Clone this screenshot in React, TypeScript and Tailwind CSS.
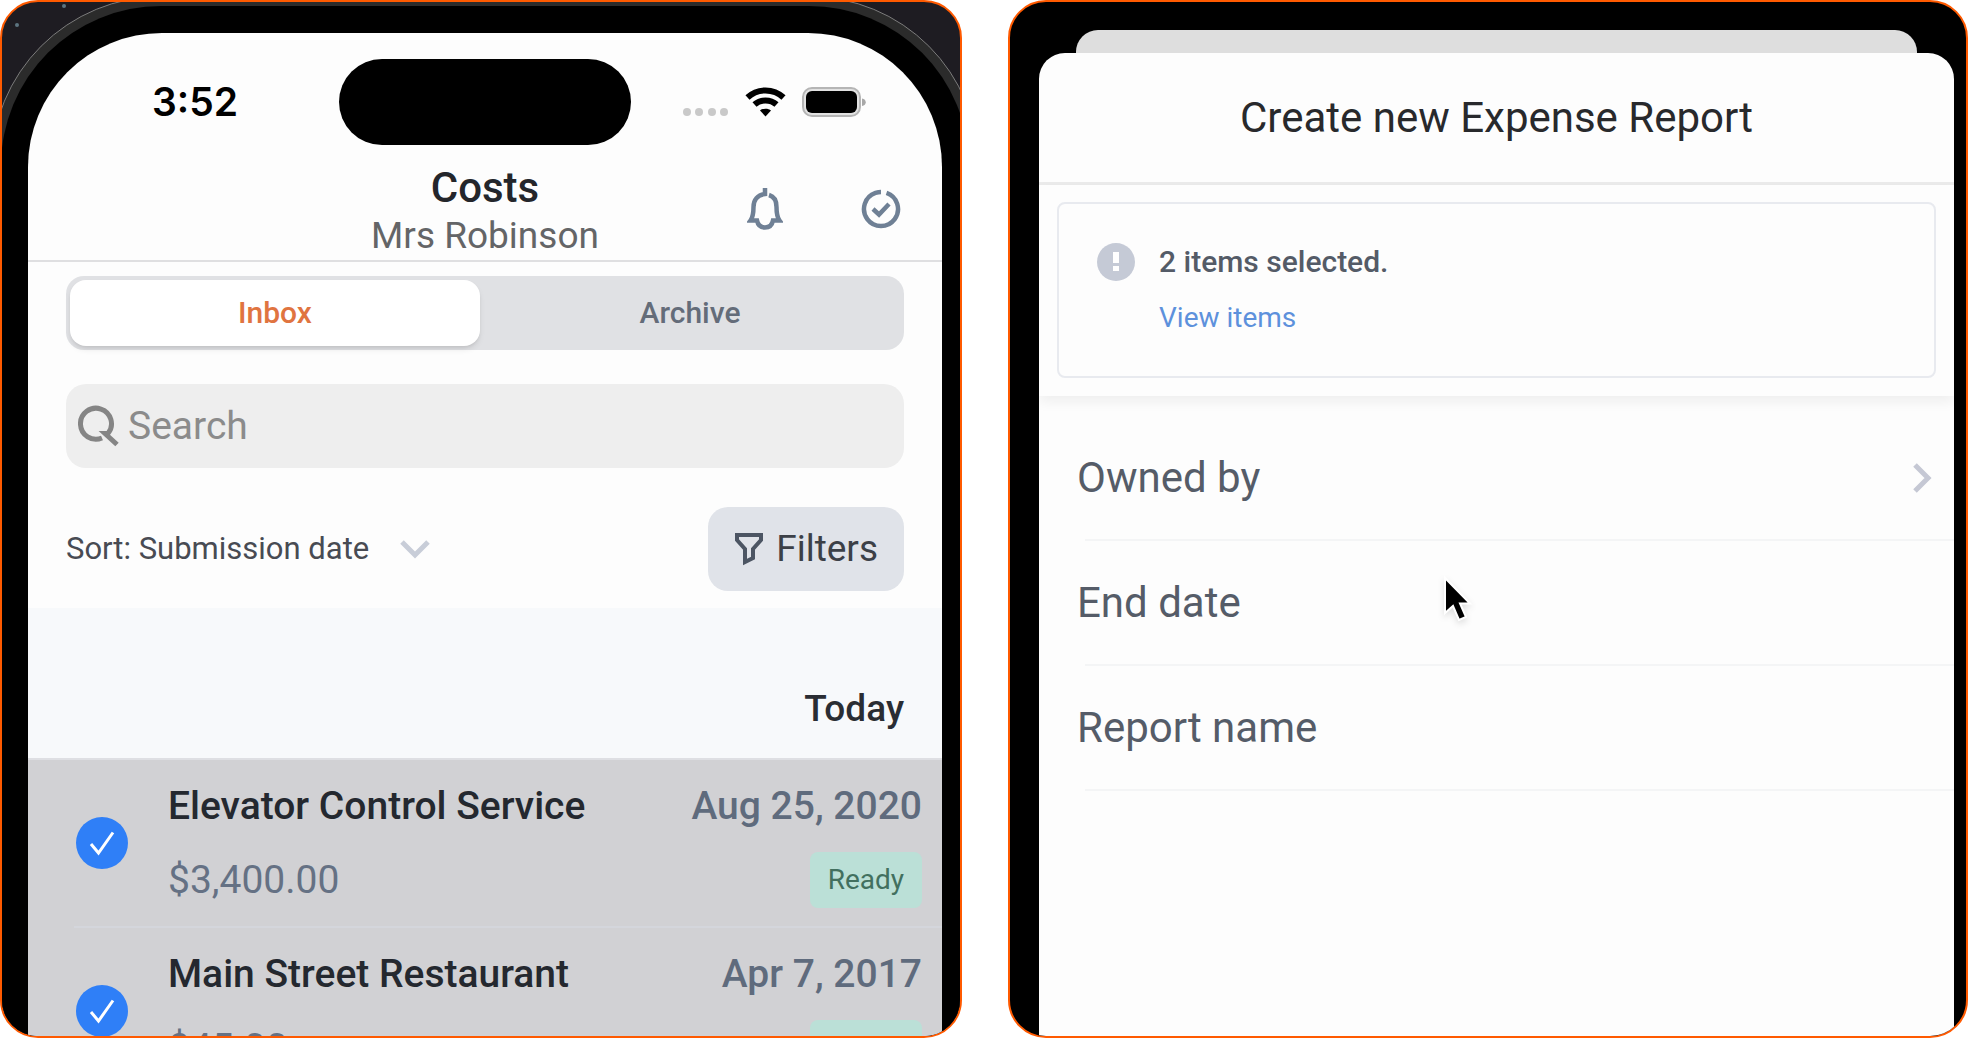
import { useState } from "react";

const expenses = [
    { id: "elevator", title: "Elevator Control Service", date: "Aug 25, 2020", amount: "$3,400.00", status: "Ready" },
    { id: "restaurant", title: "Main Street Restaurant", date: "Apr 7, 2017", amount: "$45.00", status: "Ready" },
];

function StatusIcons() {
    return (
        <svg width="184" height="32" viewBox="0 0 184 32" aria-hidden="true">
            <g fill="#c9c9c9">
                <circle cx="5" cy="26" r="4" />
                <circle cx="17" cy="26" r="4" />
                <circle cx="30" cy="26" r="4" />
                <circle cx="42" cy="26" r="4" />
            </g>
            <g fill="none" stroke="#000" strokeWidth="6">
                <path d="M65.500 11.500C75.500 2 91.500 2 101.500 11.500" />
                <path d="M72.500 18.500C78.500 13 88.500 13 94.500 18.500" />
            </g>
            <path d="M78 24.500C80.500 22 86.500 22 89 24.500L83.500 30.500Z" fill="#000" />
            <rect x="121" y="2" width="57" height="28" rx="9" fill="#e2e2e2" stroke="#b5b5b5" strokeWidth="2" />
            <rect x="124" y="5" width="51" height="22" rx="6" fill="#000" />
            <path d="M180 12.500C185 13 185 19.500 180 20Z" fill="#a8a8a8" />
        </svg>
    );
}

function BellIcon() {
    return (
        <svg width="36" height="44" viewBox="0 0 36 44" fill="none" stroke="#6f8095" strokeWidth="4.500" aria-hidden="true">
            <path d="M18 1V7C10.500 8 6.500 13 6.500 20C6.500 27 6 30 3.500 33.500H10C11 38.500 14 40.500 18 40.500C22 40.500 25 38.500 26 33.500H32.500C30 30 29.500 27 29.500 20C29.500 14 27 9.500 22 8" />
        </svg>
    );
}

function ApprovedIcon() {
    return (
        <svg width="40" height="40" viewBox="0 0 40 40" fill="none" stroke="#6f8095" strokeWidth="4.500" aria-hidden="true">
            <path d="M25.500 3.900A17 17 0 1 1 14.500 3.900Q17.500 3 20 3" />
            <path d="M12 20L18 25.500L28 15" />
        </svg>
    );
}

function ExpenseRow({ id, title, date, amount, status }: (typeof expenses)[number]) {
    const [checked, setChecked] = useState(true);

    return (
        <li className="pl-[46px]">
            <div className="flex h-[168px] items-center gap-10 border-b-2 border-[#d4d6dc] pr-5 pl-0.5">
                <span className="grid shrink-0 place-items-center">
                    <input
                        id={id}
                        type="checkbox"
                        checked={checked}
                        onChange={() => setChecked(!checked)}
                        className="col-start-1 row-start-1 size-[52px] appearance-none rounded-full bg-white checked:bg-[#2f7ff7]"
                    />
                    <svg width="28" height="28" viewBox="0 0 28 28" className="pointer-events-none col-start-1 row-start-1" fill="none" stroke="#fff" strokeWidth="3" aria-hidden="true">
                        <path d="M3 15L10.500 24L25 3.500" />
                    </svg>
                </span>
                <div className="flex-1">
                    <div className="flex h-[74px] items-center justify-between text-[39px] font-medium">
                        <label htmlFor={id} className="text-[#24282f]">{title}</label>
                        <span className="text-[#5f6b7d]">{date}</span>
                    </div>
                    <div className="flex h-[74px] items-center justify-between">
                        <span className="text-[39px] text-[#657184]">{amount}</span>
                        <span className="rounded-lg bg-[#bbe0d7] px-[18px] text-[28px] leading-[56px] text-[#42705f]">{status}</span>
                    </div>
                </div>
            </div>
        </li>
    );
}

function CostsPhone() {
    const [tab, setTab] = useState("Inbox");

    return (
        <section className="relative flex flex-col overflow-hidden rounded-[38px] border-2 border-[#ff5a00] bg-[#1e1c22]">
            {/* night wallpaper behind the device */}
            <svg className="absolute top-0 left-0" width="80" height="80" fill="#5d7480" aria-hidden="true">
                <circle cx="62" cy="4" r="2" />
                <circle cx="15" cy="23" r="2" />
            </svg>
            <div className="relative -mt-1.5 -mr-[19px] -ml-[11px] flex-1 rounded-t-[170px] border border-[#7c7c7c] bg-[#2b2b2b] p-[9px]">
                <div className="h-full rounded-t-[160px] bg-black p-[27px]">
                    <div className="h-full overflow-hidden rounded-t-[134px] bg-[#fdfdfd]">
                        <div className="grid grid-cols-[1fr_292px_1fr] items-center pt-[26px]">
                            <span className="pl-[124px] font-[Inter] text-[39px] font-semibold text-black">3:52</span>
                            <span className="h-[86px] rounded-full bg-black" />
                            <span className="flex justify-end pr-[76px]">
                                <StatusIcons />
                            </span>
                        </div>

                        <header className="grid grid-cols-[1fr_auto_1fr] items-center border-b-2 border-[#dfdfe1] pt-[19px]">
                            <div className="col-start-2 text-center leading-[48px]">
                                <h1 className="text-[42px] font-medium text-[#24262b]">Costs</h1>
                                <p className="text-[37px] text-[#646567]">Mrs Robinson</p>
                            </div>
                            <div className="flex items-center justify-end gap-[78px] pr-[41px] pb-1.5">
                                <button aria-label="Notifications"><BellIcon /></button>
                                <button aria-label="Approvals"><ApprovedIcon /></button>
                            </div>
                        </header>

                        <div className="px-[38px]">
                            <div role="tablist" className="mt-3.5 grid grid-cols-[410fr_420fr] rounded-[18px] bg-[#e0e1e4] p-1 text-[30px] leading-[66px] font-medium">
                                {["Inbox", "Archive"].map((name) => (
                                    <button
                                        key={name}
                                        role="tab"
                                        aria-selected={tab === name}
                                        onClick={() => setTab(name)}
                                        className="rounded-2xl text-[#646c79] aria-selected:bg-white aria-selected:text-[#e07440] aria-selected:shadow-md"
                                    >
                                        {name}
                                    </button>
                                ))}
                            </div>

                            <label className="mt-[34px] flex h-[84px] items-center gap-2 rounded-[20px] bg-[#eeeeee] pl-3">
                                <svg width="42" height="42" viewBox="0 0 42 42" fill="none" stroke="#858585" strokeWidth="5" aria-hidden="true">
                                    <path d="M24 33A15.500 15.500 0 1 1 30 28.500H27L39 39.500" />
                                </svg>
                                <input type="search" placeholder="Search" aria-label="Search" className="min-w-0 flex-1 text-[39px] outline-none placeholder:text-[#8b8b8b]" />
                            </label>

                            <div className="flex items-center justify-between pt-[39px] pb-[17px]">
                                <label className="flex items-center gap-[30px]">
                                    <select aria-label="Sort" className="appearance-none text-[31px] text-[#484b53]">
                                        <option>Sort: Submission date</option>
                                    </select>
                                    <svg width="30" height="20" viewBox="0 0 30 20" fill="none" stroke="#c8cdd8" strokeWidth="5" aria-hidden="true">
                                        <path d="M2 3L15 16L28 3" />
                                    </svg>
                                </label>
                                <button className="flex h-[84px] items-center gap-3 rounded-[20px] bg-[#e0e3e9] px-[26px] text-[37px] text-[#3c4047]">
                                    <svg width="30" height="34" viewBox="0 0 30 34" fill="none" stroke="#4c5563" strokeWidth="4" aria-hidden="true">
                                        <path d="M3 3H27V8L19 17V26L11 30V17L3 8Z" />
                                    </svg>
                                    Filters
                                </button>
                            </div>
                        </div>

                        <h2 className="flex h-[152px] items-end justify-end border-b-2 border-[#dedfe3] bg-[#f7f9fb] px-[38px] pb-[22px] text-[37px] font-medium text-[#2a2d33]">
                            Today
                        </h2>
                        <ul className="bg-[#d1d1d4]">
                            {expenses.map((expense) => (
                                <ExpenseRow key={expense.id} {...expense} />
                            ))}
                        </ul>
                    </div>
                </div>
            </div>
        </section>
    );
}

function ReportPhone() {
    return (
        <section className="relative flex flex-col overflow-hidden rounded-[38px] border-2 border-[#ff5a00] bg-black pt-7 pr-3 pl-[29px]">
            <div className="mx-[37px] h-[23px] shrink-0 rounded-t-[22px] bg-[#dedede]" />
            <form className="flex-1 rounded-t-[26px] bg-[#fdfdfd]" onSubmit={(e) => e.preventDefault()}>
                <h1 className="border-b-3 border-[#ebebeb] text-center text-[42px] leading-[129px] text-[#28292c]">
                    Create new Expense Report
                </h1>
                <div className="px-[18px] pt-[17px] pb-[18px] shadow-[0_6px_12px_rgba(0,0,0,0.06)]">
                    <div className="flex gap-6 rounded-lg border-2 border-[#e8eaef] px-[38px] py-[30px]">
                        <svg width="38" height="38" viewBox="0 0 38 38" className="mt-[9px]" aria-hidden="true">
                            <circle cx="19" cy="19" r="19" fill="#c5cad6" />
                            <path d="M16 9H22V20H16ZM16 23H22V28H16Z" fill="#fff" />
                        </svg>
                        <div className="leading-[56px]">
                            <p className="text-[30px] font-medium text-[#545b67]">2 items selected.</p>
                            <a href="#items" className="block text-[28px] text-[#5d91dc]">View items</a>
                        </div>
                    </div>
                </div>

                <div className="pt-5 text-[42px] text-[#555c68]">
                    <button className="flex h-[123px] w-full items-center justify-between pr-[22px] pl-[38px]">
                        Owned by
                        <svg width="20" height="32" viewBox="0 0 20 32" fill="none" stroke="#c5c8d4" strokeWidth="5" aria-hidden="true">
                            <path d="M3 3L16 16L3 29" />
                        </svg>
                    </button>
                    <hr className="ml-[46px] border-t-2 border-[#f4f5f6]" />
                    {["End date", "Report name"].map((name) => (
                        <div key={name}>
                            <input aria-label={name} placeholder={name} className="block h-[123px] w-full pl-[38px] outline-none placeholder:text-[#555c68]" />
                            <hr className="ml-[46px] border-t-2 border-[#f4f5f6]" />
                        </div>
                    ))}
                </div>
            </form>

            {/* mouse pointer */}
            <svg className="absolute top-[572px] left-[430px] drop-shadow-md" width="36" height="52" viewBox="0 0 36 52" aria-hidden="true">
                <path d="M5 4V39L13 32L19 46L26 43L20 29.500H30Z" fill="#000" stroke="#fff" strokeWidth="2" />
            </svg>
        </section>
    );
}

export default function App() {
    return (
        <main className="grid h-screen grid-cols-[962fr_960fr] grid-rows-1 gap-[46px] overflow-hidden bg-white font-[Roboto,sans-serif]">
            <CostsPhone />
            <ReportPhone />
        </main>
    );
}
